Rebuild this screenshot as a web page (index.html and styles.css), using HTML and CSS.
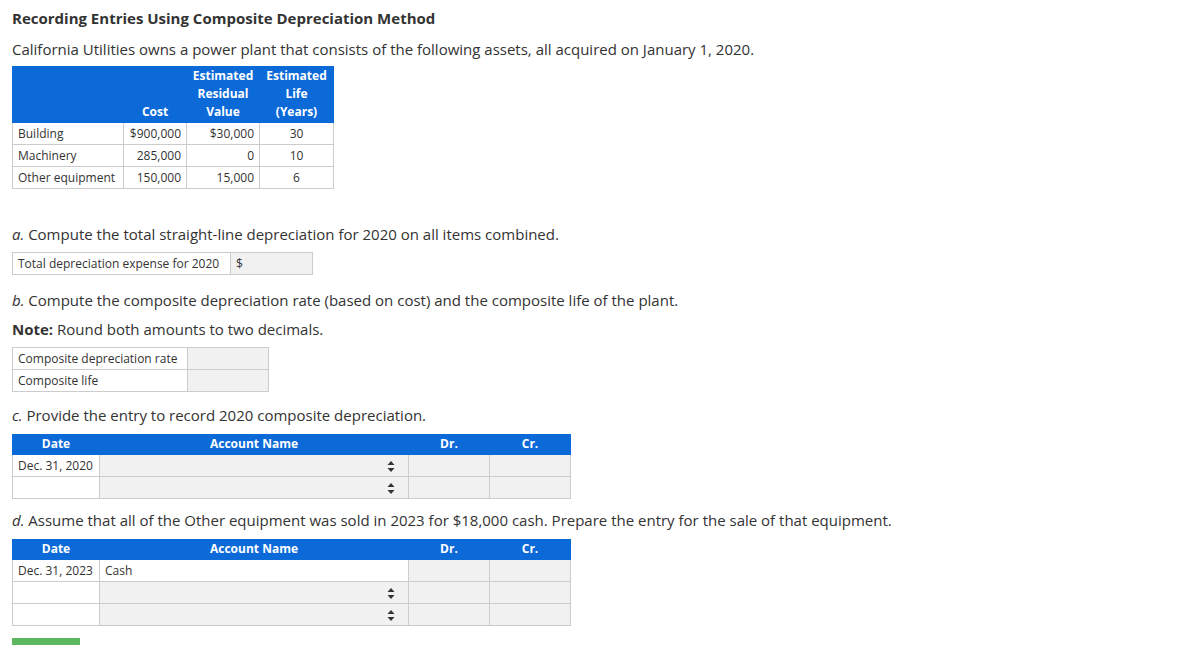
FILE: index.html
```
<!DOCTYPE html>
<html lang="en">
<head>
  <meta charset="UTF-8">
  <title>Recording Entries Using Composite Depreciation Method</title>
  <link rel="stylesheet" href="styles.css">
</head>
<body>

<h1 class="titulo">Recording Entries Using Composite Depreciation Method</h1>
<p class="intro">California Utilities owns a power plant that consists of the following assets, all acquired on January 1, 2020.</p>

<table class="ativos">
  <tr class="cabecalho">
    <th class="col-nome"></th>
    <th class="col-custo">Cost</th>
    <th class="col-residual">Estimated<br>Residual<br>Value</th>
    <th class="col-vida">Estimated<br>Life<br>(Years)</th>
  </tr>
  <tr>
    <td>Building</td>
    <td class="num">$900,000</td>
    <td class="num">$30,000</td>
    <td class="centro">30</td>
  </tr>
  <tr>
    <td>Machinery</td>
    <td class="num">285,000</td>
    <td class="num">0</td>
    <td class="centro">10</td>
  </tr>
  <tr>
    <td>Other equipment</td>
    <td class="num">150,000</td>
    <td class="num">15,000</td>
    <td class="centro">6</td>
  </tr>
</table>

<p class="parte parte-a"><i>a.</i> Compute the total straight-line depreciation for 2020 on all items combined.</p>
<table class="resposta resposta-a">
  <tr>
    <td class="rotulo">Total depreciation expense for 2020</td>
    <td class="campo">$</td>
  </tr>
</table>

<p class="parte parte-b"><i>b.</i> Compute the composite depreciation rate (based on cost) and the composite life of the plant.</p>
<p class="nota"><b>Note:</b> Round both amounts to two decimals.</p>
<table class="resposta resposta-b">
  <tr>
    <td class="rotulo">Composite depreciation rate</td>
    <td class="campo"></td>
  </tr>
  <tr>
    <td class="rotulo">Composite life</td>
    <td class="campo"></td>
  </tr>
</table>

<p class="parte parte-c"><i>c.</i> Provide the entry to record 2020 composite depreciation.</p>
<table class="diario">
  <tr class="cabecalho">
    <th class="d-data">Date</th>
    <th class="d-conta">Account Name</th>
    <th class="d-valor">Dr.</th>
    <th class="d-valor">Cr.</th>
  </tr>
  <tr>
    <td class="data">Dec. 31, 2020</td>
    <td class="campo conta"><span class="seta"><svg width="8" height="11" viewBox="0 0 8 11"><path d="M4 0 L7.5 4 H0.5 Z M0.5 7 H7.5 L4 11 Z" fill="#333"/></svg></span></td>
    <td class="campo"></td>
    <td class="campo"></td>
  </tr>
  <tr>
    <td class="data"></td>
    <td class="campo conta"><span class="seta"><svg width="8" height="11" viewBox="0 0 8 11"><path d="M4 0 L7.5 4 H0.5 Z M0.5 7 H7.5 L4 11 Z" fill="#333"/></svg></span></td>
    <td class="campo"></td>
    <td class="campo"></td>
  </tr>
</table>

<p class="parte parte-d"><i>d.</i> Assume that all of the Other equipment was sold in 2023 for $18,000 cash. Prepare the entry for the sale of that equipment.</p>
<table class="diario">
  <tr class="cabecalho">
    <th class="d-data">Date</th>
    <th class="d-conta">Account Name</th>
    <th class="d-valor">Dr.</th>
    <th class="d-valor">Cr.</th>
  </tr>
  <tr>
    <td class="data">Dec. 31, 2023</td>
    <td class="fixo">Cash</td>
    <td class="campo"></td>
    <td class="campo"></td>
  </tr>
  <tr>
    <td class="data"></td>
    <td class="campo conta"><span class="seta"><svg width="8" height="11" viewBox="0 0 8 11"><path d="M4 0 L7.5 4 H0.5 Z M0.5 7 H7.5 L4 11 Z" fill="#333"/></svg></span></td>
    <td class="campo"></td>
    <td class="campo"></td>
  </tr>
  <tr>
    <td class="data"></td>
    <td class="campo conta"><span class="seta"><svg width="8" height="11" viewBox="0 0 8 11"><path d="M4 0 L7.5 4 H0.5 Z M0.5 7 H7.5 L4 11 Z" fill="#333"/></svg></span></td>
    <td class="campo"></td>
    <td class="campo"></td>
  </tr>
</table>

<div class="barra-verde"></div>

</body>
</html>
```

FILE: styles.css
```
body {
  margin: 0;
  padding: 0 12px;
  font-family: "Open Sans", "Liberation Sans", sans-serif;
  color: #333;
  background: #fff;
}

.titulo {
  margin: 8px 0 0;
  font-size: 15px;
  font-weight: bold;
  line-height: 20px;
}

.intro {
  margin: 11px 0 0;
  font-size: 15px;
  line-height: 20px;
}

table {
  border-collapse: collapse;
  table-layout: fixed;
  font-size: 12px;
}

td, th {
  box-sizing: border-box;
  border: 1px solid #ccc;
  padding: 0 5px;
  height: 22px;
  line-height: 16px;
  white-space: nowrap;
}

/* tabela de ativos */
.ativos {
  margin-top: 7px;
  width: 321px;
}

.ativos .cabecalho th {
  background-color: #0b69d8;
  color: white;
  border-color: #0b69d8;
  vertical-align: bottom;
  text-align: center;
  line-height: 18px;
  padding: 0 3px 1px;
  height: 55px;
}

.ativos .col-nome { width: 111px; }
.ativos .col-custo { width: 63px; }
.ativos .col-residual { width: 73px; }
.ativos .col-vida { width: 74px; }

.num {
  text-align: right;
}

.centro {
  text-align: center;
}

/* partes a, b, c, d */
.parte {
  font-size: 15px;
  line-height: 20px;
  margin: 0;
}

.parte-a { margin-top: 35px; }
.parte-b { margin-top: 15px; }
.parte-c { margin-top: 13px; }
.parte-d { margin-top: 11px; }

.nota {
  font-size: 15px;
  line-height: 20px;
  margin: 9px 0 0;
}

.resposta {
  margin-top: 8px;
}

.resposta-a { width: 300px; }
.resposta-b { width: 256px; margin-top: 8px; }

.campo {
  background-color: #f1f1f1;
}

.resposta-a .rotulo { width: 218px; }
.resposta-a .campo { width: 82px; }
.resposta-b .rotulo { width: 175px; }
.resposta-b .campo { width: 81px; }

/* diarios */
.diario {
  margin-top: 9px;
  width: 558px;
}

.diario .cabecalho th {
  background-color: #0b69d8;
  color: white;
  border-color: #0b69d8;
  height: 20px;
  padding: 0;
  text-align: center;
  vertical-align: top;
  line-height: 18px;
}

.diario .d-data { width: 87px; }
.diario .d-conta { width: 309px; }
.diario .d-valor { width: 81px; }

.conta {
  text-align: right;
  padding-right: 13px;
}

.seta svg {
  display: inline-block;
  vertical-align: middle;
}

.fixo {
  background: #fff;
}

.barra-verde {
  margin-top: 12px;
  width: 68px;
  height: 8px;
  background-color: #5cb85c;
}
```
